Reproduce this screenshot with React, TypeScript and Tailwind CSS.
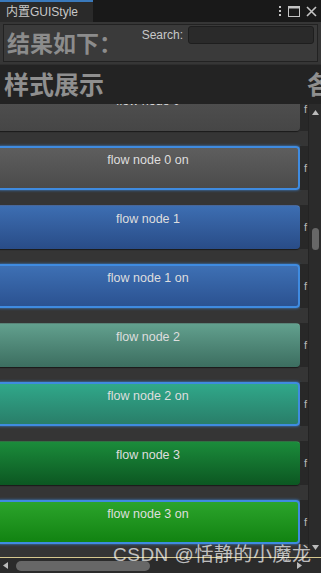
import React from 'react';

interface NodeStyle {
  label: string;
  bg: string;
  on: boolean;
}

const nodes: NodeStyle[] = [
  { label: 'flow node 0', bg: 'bg-gradient-to-b from-[#525252] to-[#464646]', on: false },
  { label: 'flow node 0 on', bg: 'bg-gradient-to-b from-[#5e5e5e] to-[#4b4b4b]', on: true },
  { label: 'flow node 1', bg: 'bg-gradient-to-b from-[#3d6eb2] to-[#294c87]', on: false },
  { label: 'flow node 1 on', bg: 'bg-gradient-to-b from-[#3e70b4] to-[#2b5291]', on: true },
  { label: 'flow node 2', bg: 'bg-gradient-to-b from-[#62a08e] to-[#3c6e60]', on: false },
  { label: 'flow node 2 on', bg: 'bg-gradient-to-b from-[#30a88a] to-[#297e69]', on: true },
  { label: 'flow node 3', bg: 'bg-gradient-to-b from-[#1b8c3b] to-[#0c5722]', on: false },
  { label: 'flow node 3 on', bg: 'bg-gradient-to-b from-[#2ba42b] to-[#118311]', on: true }
];

function NodeRow({ node }: { node: NodeStyle }) {
  return (
    <div className="flex h-[59px] shrink-0">
      <div
        className={`-ml-[4px] w-[304px] h-[44px] rounded-[4px] ${node.bg} ${node.on ? 'border-2 border-[#3f8be0] shadow-[0_0_3px_#3f8be0] pt-[5px]' : 'border-t border-white/15 shadow-[0_1px_1px_#1a1a1a] pt-[6px]'} flex justify-center text-[12.5px] leading-[14px] text-[#dedede]`}>
        {node.label}
      </div>
      <div className="w-[8px] h-[44px] bg-[#282828] flex items-center justify-end pr-[1px] text-[11px] text-[#b8b8b8]">
        f
      </div>
    </div>);

}

export default function App() {
  return (
    <div
      className="w-[321px] h-[573px] bg-[#282828] overflow-hidden relative flex flex-col"
      style={{ fontFamily: '"Liberation Sans", "Noto Sans CJK SC", sans-serif' }}>

      {/* tab bar */}
      <div className="h-[22px] bg-[#191919] flex items-stretch shrink-0">
        <div className="w-[93px] bg-[#2a2a2a] border-t-2 border-[#3a79bb] flex items-center pl-[6px] text-[12px] text-[#c8c8c8]">
          内置GUIStyle
        </div>
        <div className="flex-1" />
        <div className="flex items-center gap-[6px] pr-[4px] text-[#c4c4c4]">
          <svg width="4" height="12" viewBox="0 0 4 12">
            <rect x="1" y="1" width="2" height="2" fill="currentColor" />
            <rect x="1" y="5" width="2" height="2" fill="currentColor" />
            <rect x="1" y="9" width="2" height="2" fill="currentColor" />
          </svg>
          <svg width="12" height="11" viewBox="0 0 12 11">
            <rect x="0.5" y="0.5" width="11" height="10" fill="none" stroke="currentColor" />
            <rect x="0.5" y="0.5" width="11" height="2" fill="currentColor" />
          </svg>
          <svg width="11" height="11" viewBox="0 0 11 11">
            <path d="M1 1L10 10M10 1L1 10" stroke="currentColor" strokeWidth="1.6" />
          </svg>
        </div>
      </div>

      {/* result panel */}
      <div className="h-[42px] bg-[#363636] px-[3px] py-[2px] shrink-0">
        <div className="h-full border border-[#222] bg-[#3a3a3a] flex items-start overflow-hidden">
          <div className="pl-[3px] pt-[5px] text-[23px] leading-[28px] font-bold text-[#8c8c8c] whitespace-nowrap">结果如下：</div>
          <div className="ml-auto flex items-center pt-[1px] pr-[3px]">
            <span className="text-[12px] text-[#c8c8c8] mr-[5px]">Search:</span>
            <div className="w-[126px] h-[18px] rounded-[3px] bg-[#2a2a2a] border border-[#1e1e1e]" />
          </div>
        </div>
      </div>

      {/* section header */}
      <div className="h-[40px] bg-[#232323] flex items-center justify-between shrink-0 border-t border-[#2e2e2e] overflow-hidden">
        <div className="pl-[4px] text-[25px] leading-[30px] font-bold text-[#8f8f8f] whitespace-nowrap">样式展示</div>
        <div className="text-[25px] leading-[30px] font-bold text-[#8f8f8f] -mr-[11px]">各</div>
      </div>

      {/* scroll view */}
      <div className="h-[453px] flex shrink-0 bg-[#353535]">
        <div className="w-[308px] overflow-hidden flex flex-col">
          <div className="-mt-[17px] flex flex-col">
            {nodes.map((n) =>
            <NodeRow key={n.label} node={n} />
            )}
          </div>
        </div>
        <div className="w-[13px] bg-[#2b2b2b] border-l border-[#232323] flex flex-col items-center">
          <div className="mt-[6px] text-[#bbbbbb]">
            <svg width="7" height="5" viewBox="0 0 7 5"><path d="M0 5L3.5 0L7 5Z" fill="currentColor" /></svg>
          </div>
          <div className="mt-[113px] w-[7px] h-[22px] rounded-full bg-[#676767]" />
          <div className="flex-1" />
          <div className="mb-[7px] text-[#bbbbbb]">
            <svg width="7" height="5" viewBox="0 0 7 5"><path d="M0 0L7 0L3.5 5Z" fill="currentColor" /></svg>
          </div>
        </div>
      </div>

      {/* horizontal scrollbar */}
      <div className="h-[16px] bg-[#2b2b2b] flex items-center shrink-0 border-t border-[#d6c88f]">
        <div className="w-[308px] h-full flex items-center">
          <svg className="ml-[3px]" width="5" height="7" viewBox="0 0 5 7"><path d="M5 0L5 7L0 3.5Z" fill="#bbbbbb" /></svg>
          <div className="ml-[8px] w-[134px] h-[10px] rounded-full bg-[#676767]" />
          <div className="flex-1" />
          <svg className="mr-[6px]" width="5" height="7" viewBox="0 0 5 7"><path d="M0 0L5 3.5L0 7Z" fill="#bbbbbb" /></svg>
        </div>
      </div>

      {/* watermark */}
      <div className="absolute left-[113px] top-[541px] text-[19px] text-white/70 tracking-[0.5px] pointer-events-none">
        CSDN @恬静的小魔龙
      </div>
    </div>);

}
